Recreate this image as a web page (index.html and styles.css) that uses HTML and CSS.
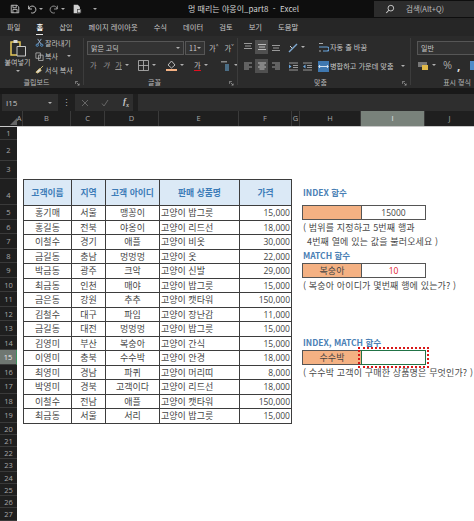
FILE: index.html
```html
<!DOCTYPE html>
<html lang="ko">
<head>
<meta charset="utf-8">
<title>멍 때리는 야옹이_part8 - Excel</title>
<link rel="stylesheet" href="styles.css">
</head>
<body>
<div class="app">
  <header class="titlebar">
    <div class="qat">
      <svg class="qi" viewBox="0 0 12 12"><path d="M1.5 1.5h7l2 2v7h-9zM3.5 1.5v3h4v-3M3.5 10.5v-4h5v4" fill="none" stroke="#cfcfcf" stroke-width="1"/></svg>
      <svg class="qi qi-undo" viewBox="0 0 12 12"><path d="M2 2v4h4M2.3 6A4.2 4.2 0 1 1 5 10.6" fill="none" stroke="#cfcfcf" stroke-width="1.1"/></svg>
      <span class="qcaret"></span>
      <svg class="qi qi-redo" viewBox="0 0 12 12"><path d="M10 2v4H6M9.7 6A4.2 4.2 0 1 0 7 10.6" fill="none" stroke="#9a9a9a" stroke-width="1.1"/></svg>
      <span class="qcaret"></span>
      <svg class="qi qi-file" viewBox="0 0 12 12"><path d="M2 1h5l2.500 2.500V11H2z" fill="#cfcfcf"/><path d="M6 6h5v5H6z" fill="#555"/><path d="M7 7h3v3H7z" fill="#cfcfcf"/></svg>
      <span class="qcaret qcaret-last"></span>
    </div>
    <div class="doc-title">멍 때리는 야옹이_part8&nbsp; -&nbsp; Excel</div>
    <div class="search">
      <svg class="search-icon" viewBox="0 0 12 12"><circle cx="7" cy="5" r="3.400" fill="none" stroke="#d0d0d0" stroke-width="1.100"/><path d="M4.600 7.500 1.500 10.800" stroke="#d0d0d0" stroke-width="1.300"/></svg>
      <span>검색(Alt+Q)</span>
    </div>
  </header>

  <nav class="tabs">
    <span>파일</span><span class="tab-on">홈</span><span>삽입</span><span>페이지 레이아웃</span><span>수식</span><span>데이터</span><span>검토</span><span>보기</span><span>도움말</span>
  </nav>

  <section class="ribbon">
    <div class="group g-clip">
      <div class="group-body clip-body">
        <div class="paste">
          <svg class="paste-icon" viewBox="0 0 18 18"><path d="M2 3h9v13H2z" fill="none" stroke="#e6c85a" stroke-width="1.500"/><path d="M4.500 1h4v3h-4z" fill="#d8d8d8"/><path d="M8 7.500h8.500V17H8z" fill="#2b2b2b" stroke="#c9c9c9"/></svg>
          <span>붙여넣기</span>
          <span class="caret caret-paste"></span>
        </div>
        <div class="clip-list">
          <div class="clip-row"><svg class="ci" viewBox="0 0 10 10"><path d="M3 1l4 6M7 1 3 7" stroke="#9db8d8" stroke-width="1"/><circle cx="2.500" cy="8" r="1.300" fill="none" stroke="#5b9bd5"/><circle cx="7.500" cy="8" r="1.300" fill="none" stroke="#5b9bd5"/></svg><span>잘라내기</span></div>
          <div class="clip-row"><svg class="ci" viewBox="0 0 10 10"><path d="M1 1h5v6H1zM4 3.500h5V9.500H4z" fill="#2b2b2b" stroke="#c4c4c4" stroke-width=".8"/></svg><span>복사</span><span class="caret caret-copy"></span></div>
          <div class="clip-row"><svg class="ci" viewBox="0 0 10 10"><path d="M5 5 9 1M1 8l4-4 2 2-4 3z" stroke="#d9c27a" fill="#d9d9d9" stroke-width="1"/></svg><span>서식 복사</span></div>
        </div>
      </div>
      <div class="group-label">클립보드<svg class="launcher" viewBox="0 0 6 6"><path d="M.5.500h3M.5.500v3M2 2l3 3M5 3v2H3" stroke="#aaa" fill="none" stroke-width=".8"/></svg></div>
    </div>

    <div class="group g-font">
      <div class="group-body font-body">
        <div class="font-row">
          <div class="combo combo-font"><span>맑은 고딕</span><span class="caret"></span></div>
          <div class="combo combo-size"><span>11</span><span class="caret"></span></div>
          <span class="rb-text size-up">가<sup>^</sup></span>
          <span class="rb-text size-down">가<sup>ˇ</sup></span>
        </div>
        <div class="font-row font-row2">
          <span class="rb-text fm">가</span><span class="rb-text fm fm-i">가</span><span class="rb-text fm fm-u">가</span><span class="caret"></span>
          <svg class="ri ri-border" viewBox="0 0 11 11"><path d="M.5.500h10v10H.5zM.5 5.500h10M5.500.500v10" fill="none" stroke="#aaa" stroke-width=".9"/></svg><span class="caret"></span>
          <svg class="ri ri-fill" viewBox="0 0 11 11"><path d="M5.500 1 9 5 5.500 8 2 5z" fill="none" stroke="#bbb"/><path d="M0 9h11v2H0z" fill="#f4b183"/></svg><span class="caret"></span>
          <span class="rb-text color-a">가</span><span class="caret"></span>
          <svg class="ri ri-phon" viewBox="0 0 11 11"><path d="M1 1h6v1.500H1z" fill="#888"/><path d="M5 4h4v7H5z" fill="#4b6d85"/></svg><span class="caret"></span>
        </div>
      </div>
      <div class="group-label">글꼴<svg class="launcher" viewBox="0 0 6 6"><path d="M.5.500h3M.5.500v3M2 2l3 3M5 3v2H3" stroke="#aaa" fill="none" stroke-width=".8"/></svg></div>
    </div>

    <div class="group g-align">
      <div class="group-body align-body">
        <div class="align-row">
          <span class="al"><svg viewBox="0 0 10 10"><path d="M1 1.500h8M2 4h6M1 6.500h8" stroke="#999"/></svg></span>
          <span class="al al-on"><svg viewBox="0 0 10 10"><path d="M1 2.500h8M2 5h6M1 7.500h8" stroke="#bbb"/></svg></span>
          <span class="al"><svg viewBox="0 0 10 10"><path d="M1 3.500h8M2 6h6M1 8.500h8" stroke="#999"/></svg></span>
          <svg class="ri ri-orient" viewBox="0 0 11 11"><path d="M1 10 9 2" stroke="#7fa8d0" stroke-width="1.500"/><path d="M2 4l2 2" stroke="#ccc"/></svg><span class="caret"></span>
          <svg class="ri ri-wrap" viewBox="0 0 11 11"><path d="M1 1.500h4" stroke="#aaa"/><path d="M1 5h8a1.500 1.500 0 0 1 0 4H5" fill="none" stroke="#6aa5dc" stroke-width="1.200"/><path d="M1 9h2" stroke="#aaa"/></svg>
          <span class="rb-text">자동 줄 바꿈</span>
        </div>
        <div class="align-row">
          <span class="al"><svg viewBox="0 0 10 10"><path d="M1 2h8M1 4h5M1 6h8M1 8h5" stroke="#999"/></svg></span>
          <span class="al al-on"><svg viewBox="0 0 10 10"><path d="M1 2h8M2.500 4h5M1 6h8M2.500 8h5" stroke="#bbb"/></svg></span>
          <span class="al"><svg viewBox="0 0 10 10"><path d="M1 2h8M4 4h5M1 6h8M4 8h5" stroke="#999"/></svg></span>
          <svg class="ri ri-indent" viewBox="0 0 11 11"><path d="M1 2h9M5 4.500h5M5 6.500h5M1 9h9" stroke="#999"/><path d="M1 3.500v4l2.500-2z" fill="#6aa5dc"/></svg>
          <svg class="ri ri-outdent" viewBox="0 0 11 11"><path d="M1 2h9M5 4.500h5M5 6.500h5M1 9h9" stroke="#999"/><path d="M3.500 3.500v4L1 5.500z" fill="#6aa5dc"/></svg>
          <svg class="ri ri-merge" viewBox="0 0 11 11"><path d="M0 0h11v11H0z" fill="#3f78b0"/><path d="M1 5.500h9M2 4 .8 5.500 2 7M9 4l1.200 1.500L9 7" fill="none" stroke="#e6eef6" stroke-width=".9"/></svg>
          <span class="rb-text">병합하고 가운데 맞춤</span><span class="caret caret-merge"></span>
        </div>
      </div>
      <div class="group-label">맞춤<svg class="launcher" viewBox="0 0 6 6"><path d="M.5.500h3M.5.500v3M2 2l3 3M5 3v2H3" stroke="#aaa" fill="none" stroke-width=".8"/></svg></div>
    </div>

    <div class="group g-num">
      <div class="group-body num-body">
        <div class="combo combo-num"><span>일반</span></div>
        <div class="num-row">
          <svg class="ri" viewBox="0 0 11 11"><path d="M0 2h9v5H0z" fill="#777"/><path d="M4 5h6v5H4z" fill="#e0b94a"/></svg><span class="caret"></span>
          <span class="pct">%</span>
          <span class="comma">,</span>
          <svg class="ri ri-dec" viewBox="0 0 11 11"><path d="M0 1h11v9H0z" fill="#4f8cc9"/></svg>
        </div>
      </div>
      <div class="group-label">표시 형식</div>
    </div>
  </section>

  <div class="ribbon-gap"></div>

  <div class="formula-bar">
    <div class="namebox"><span>I15</span><span class="caret"></span></div>
    <span class="fb-dots">⋮</span>
    <div class="fb-btns">
      <svg class="fi" viewBox="0 0 8 8"><path d="M1 1l6 6M7 1 1 7" stroke="#666" stroke-width="1"/></svg>
      <svg class="fi" viewBox="0 0 8 8"><path d="M1 4.500 3 7 7 1" fill="none" stroke="#666" stroke-width="1"/></svg>
      <span class="fx">f<sub>x</sub></span>
    </div>
    <div class="fb-input"></div>
  </div>

  <div class="col-heads">
    <div class="corner"><span class="corner-tri"></span></div>
    <div class="ch ch-a">A</div><div class="ch ch-b">B</div><div class="ch ch-c">C</div><div class="ch ch-d">D</div><div class="ch ch-e">E</div><div class="ch ch-f">F</div><div class="ch ch-g">G</div><div class="ch ch-h">H</div><div class="ch ch-i">I</div><div class="ch ch-j">J</div>
  </div>

  <div class="sheet">
    <div class="row-heads">
      <div class="rh rh1">1</div><div class="rh rh2">2</div><div class="rh rh3">3</div><div class="rh rh4">4</div>
      <div class="rh">5</div><div class="rh">6</div><div class="rh">7</div><div class="rh">8</div><div class="rh">9</div><div class="rh">10</div><div class="rh">11</div><div class="rh">12</div><div class="rh">13</div><div class="rh">14</div>
      <div class="rh rh-on">15</div>
      <div class="rh">16</div><div class="rh">17</div><div class="rh">18</div><div class="rh">19</div>
      <div class="rh rhs">20</div><div class="rhs rh">21</div><div class="rhs rh">22</div><div class="rhs rh">23</div><div class="rhs rh">24</div><div class="rhs rh">25</div><div class="rhs rh">26</div><div class="rhs rh">27</div>
    </div>
    <main class="canvas">
      <div class="data">
        <div class="hd">고객이름</div><div class="hd">지역</div><div class="hd">고객 아이디</div><div class="hd">판매 상품명</div><div class="hd">가격</div>
        <div class="c">홍기매</div><div class="c">서울</div><div class="c">맹꽁이</div><div class="c l">고양이 밥그릇</div><div class="c r">15,000</div>
        <div class="c">홍길동</div><div class="c">전북</div><div class="c">야옹이</div><div class="c l">고양이 리드선</div><div class="c r">18,000</div>
        <div class="c">이철수</div><div class="c">경기</div><div class="c">애플</div><div class="c l">고양이 비옷</div><div class="c r">30,000</div>
        <div class="c">금길동</div><div class="c">충남</div><div class="c">멍멍멍</div><div class="c l">고양이 옷</div><div class="c r">22,000</div>
        <div class="c">박금동</div><div class="c">광주</div><div class="c">크악</div><div class="c l">고양이 신발</div><div class="c r">29,000</div>
        <div class="c">최금동</div><div class="c">인천</div><div class="c">매야</div><div class="c l">고양이 밥그릇</div><div class="c r">15,000</div>
        <div class="c">금은동</div><div class="c">강원</div><div class="c">추추</div><div class="c l">고양이 캣타워</div><div class="c r">150,000</div>
        <div class="c">김철수</div><div class="c">대구</div><div class="c">파임</div><div class="c l">고양이 장난감</div><div class="c r">11,000</div>
        <div class="c">금길동</div><div class="c">대전</div><div class="c">멍멍멍</div><div class="c l">고양이 밥그릇</div><div class="c r">15,000</div>
        <div class="c">김영미</div><div class="c">부산</div><div class="c">복숭아</div><div class="c l">고양이 간식</div><div class="c r">15,000</div>
        <div class="c">이영미</div><div class="c">충북</div><div class="c">수수박</div><div class="c l">고양이 안경</div><div class="c r">18,000</div>
        <div class="c">최영미</div><div class="c">경남</div><div class="c">파퀴</div><div class="c l">고양이 머리띠</div><div class="c r">8,000</div>
        <div class="c">박영미</div><div class="c">경북</div><div class="c">고객이다</div><div class="c l">고양이 리드선</div><div class="c r">18,000</div>
        <div class="c">이철수</div><div class="c">전남</div><div class="c">애플</div><div class="c l">고양이 캣타워</div><div class="c r">150,000</div>
        <div class="c">최금동</div><div class="c">서울</div><div class="c">서리</div><div class="c l">고양이 밥그릇</div><div class="c r">15,000</div>
      </div>
      <div class="notes">
        <div class="n-title n-first">INDEX 함수</div>
        <div class="pair"><div class="k"></div><div class="v">15000</div></div>
        <div class="n-line">( 범위를 지정하고 5번째 행과</div>
        <div class="n-line n-in">4번째 열에 있는 값을 불러오세요 )</div>
        <div class="n-title">MATCH 함수</div>
        <div class="pair"><div class="k">복숭아</div><div class="v v-red">10</div></div>
        <div class="n-line">( 복숭아 아이디가 몇번째 행에 있는가? )</div>
        <div class="n-gap"></div>
        <div class="n-title">INDEX, MATCH 함수</div>
        <div class="pair"><div class="k">수수박</div><div class="v v-sel"></div></div>
        <div class="n-line">( 수수박 고객이 구매한 상품명은 무엇인가? )</div>
      </div>
    </main>
  </div>
</div>
</body>
</html>
```
FILE: styles.css
```css
* { box-sizing: border-box; }
html, body { margin: 0; padding: 0; }
body { width: 474px; height: 521px; overflow: hidden; background: #fff; font-family: "Noto Sans CJK KR", "Noto Sans", sans-serif; }
svg { display: block; flex: none; }
.app { width: 474px; height: 521px; display: flex; flex-direction: column; overflow: hidden; }

.titlebar { height: 18px; background: #0e0e0e; display: flex; align-items: center; color: #cfcfcf; flex: none; }
.qat { display: flex; align-items: center; padding-left: 10px; width: 188px; flex: none; }
.qi { width: 10px; height: 10px; }
.qi-undo { margin-left: 7px; }
.qi-redo { margin-left: 6px; }
.qi-file { margin-left: 7px; }
.qcaret { width: 0; height: 0; margin-left: 2px; border: 2px solid transparent; border-top-color: #aaa; border-bottom: 0; }
.qcaret-last { margin-left: 11px; }
.doc-title { width: 186px; flex: none; font-size: 8px; line-height: 18px; white-space: nowrap; color: #d2d2d2; }
.search { width: 100px; height: 16px; margin-top: -1px; background: #2c2c2c; display: flex; align-items: center; padding-left: 11px; gap: 11px; font-size: 7.5px; color: #bdbdbd; flex: none; }
.search-icon { width: 10px; height: 10px; }

.tabs { height: 18px; background: #262626; display: flex; align-items: center; gap: 16px; padding-left: 7px; font-size: 7.3px; color: #c8c8c8; flex: none; white-space: nowrap; }
.tabs span { line-height: 18px; }
.tab-on { position: relative; color: #fff; font-weight: 700; }
.tab-on::after { content: ""; position: absolute; left: 0; right: 0; bottom: 1px; height: 1.500px; background: #e8e8e8; }

.ribbon { height: 52px; background: #2b2b2b; display: flex; flex: none; color: #c6c6c6; font-size: 7.2px; }
.group { display: flex; flex-direction: column; flex: none; position: relative; }
.group::after { content: ""; position: absolute; right: 0; top: 2px; bottom: 3px; width: 1px; background: #3c3c3c; }
.group-body { height: 41px; flex: none; }
.group-label { height: 11px; line-height: 10px; text-align: center; font-size: 7px; color: #b8b8b8; }
.launcher { position: absolute; right: 4px; bottom: 2px; width: 5px; height: 5px; }
.g-clip { width: 84px; }
.g-clip .group-label { padding-right: 11px; }
.g-font { width: 154px; }
.g-font .group-label { padding-right: 13px; }
.g-align { width: 173px; }
.g-align .group-label { padding-right: 8px; }
.g-num { flex: 1; }
.g-num::after { display: none; }
.g-num .group-label { padding-left: 16px; }

.caret { display: inline-block; width: 0; height: 0; border: 2px solid transparent; border-top-color: #b0b0b0; border-bottom: 0; flex: none; }
.rb-text { white-space: nowrap; line-height: 12px; }

.clip-body { display: flex; }
.paste { width: 35px; padding-top: 3px; display: flex; flex-direction: column; align-items: center; font-size: 7px; line-height: 9px; white-space: nowrap; }
.paste-icon { width: 18px; height: 18px; margin-bottom: 1px; }
.caret-paste { margin-top: 3px; }
.clip-list { display: flex; flex-direction: column; }
.clip-row { height: 13.500px; display: flex; align-items: center; gap: 1px; white-space: nowrap; font-size: 7px; }
.ci { width: 9px; height: 9px; }
.caret-copy { margin-left: 8px; }

.font-body { padding: 5px 0 0 3px; display: flex; flex-direction: column; gap: 3px; }
.font-row { display: flex; align-items: center; height: 14px; }
.combo { height: 14px; background: #333; border: 1px solid #565656; display: flex; align-items: center; justify-content: space-between; padding: 0 3px; font-size: 7px; color: #c8c8c8; flex: none; }
.combo-font { width: 97px; }
.combo-size { width: 20px; margin-left: 1px; }
.size-up { margin-left: 4px; }
.size-down { margin-left: 6px; }
.rb-text sup { font-size: 5px; line-height: 0; }
.font-row2 { padding-left: 3px; }
.fm { margin-right: 6px; color: #9c9c9c; }
.fm-i { font-style: italic; }
.fm-u { text-decoration: underline; margin-right: 3px; }
.ri { width: 11px; height: 11px; }
.ri-border { margin: 0 3px 0 9px; }
.ri-fill { margin: 0 3px 0 10px; }
.color-a { margin: 0 3px 0 10px; border-bottom: 1.500px solid #e01020; line-height: 10px; }
.ri-phon { margin: 0 3px 0 12px; }

.align-body { padding: 4px 0 0 3px; display: flex; flex-direction: column; gap: 5px; }
.align-row { display: flex; align-items: center; height: 14px; }
.al { width: 13px; height: 14px; margin-right: 1px; display: flex; align-items: center; justify-content: center; }
.al svg { width: 10px; height: 10px; }
.al-on { background: #505050; }
.ri-orient { margin: 0 2px 0 5px; }
.ri-wrap { margin: 0 1px 0 13px; }
.ri-indent { margin-left: 5px; }
.ri-outdent { margin-left: 3px; }
.ri-merge { margin: 0 1px 0 5px; }
.caret-merge { margin-left: 7px; }

.num-body { padding: 5px 0 0 6px; display: flex; flex-direction: column; gap: 3px; }
.combo-num { width: 70px; }
.num-row { height: 14px; display: flex; align-items: center; padding-left: 1px; }
.num-row .caret { margin-left: 3px; }
.pct { margin-left: 7px; font-size: 11px; color: #aaa; font-family: "Open Sans", sans-serif; line-height: 14px; }
.comma { margin-left: 5px; font-size: 12px; font-weight: 700; color: #ddd; line-height: 9px; font-family: "Open Sans", sans-serif; }
.ri-dec { margin-left: 9px; }

.ribbon-gap { height: 6px; background: #191919; flex: none; }

.formula-bar { height: 17px; background: #1f1f1f; display: flex; align-items: stretch; flex: none; }
.namebox { width: 56px; margin-left: 2px; background: #2e2e2e; display: flex; align-items: center; justify-content: space-between; padding: 0 6px 0 4px; font-size: 8px; color: #c4c4c4; font-family: "Open Sans", sans-serif; }
.fb-dots { width: 17px; text-align: center; font-size: 9px; line-height: 17px; color: #aaa; }
.fb-btns { width: 58px; background: #2e2e2e; display: flex; align-items: center; gap: 12px; padding-left: 6px; }
.fi { width: 8px; height: 8px; }
.fx { font-family: "Liberation Serif", serif; font-style: italic; font-weight: 700; font-size: 9px; color: #c8c8c8; line-height: 10px; margin-left: 2px; }
.fx sub { font-size: 6px; }
.fb-input { flex: 1; margin-left: 5px; background: #2e2e2e; }

.col-heads { height: 16px; background: #1f1f1f; display: flex; flex: none; color: #a8a8a8; font-size: 7.500px; font-family: "Open Sans", sans-serif; border-bottom: 1px solid #c8c8c8; }
.corner { width: 17px; position: relative; flex: none; }
.corner-tri { position: absolute; right: 0; bottom: 1px; width: 0; height: 0; border-left: 7px solid transparent; border-bottom: 7px solid #666; }
.ch { text-align: center; line-height: 15px; border-right: 1px solid #3a3a3a; flex: none; }
.ch-a { width: 6px; overflow: visible; text-indent: -1px; }
.ch-b { width: 48px; }
.ch-c { width: 34px; }
.ch-d { width: 54px; }
.ch-e { width: 80px; }
.ch-f { width: 53px; }
.ch-g { width: 8px; }
.ch-h { width: 61px; }
.ch-i { width: 64px; background: #79827b; color: #e8e8e8; }
.ch-j { flex: 1; border-right: 0; }

.sheet { flex: 1; display: flex; min-height: 0; }
.row-heads { width: 17px; background: #1f1f1f; flex: none; color: #a8a8a8; font-size: 7.500px; font-family: "Open Sans", sans-serif; }
.rh { height: 14.500px; line-height: 14px; text-align: center; border-bottom: 1px solid #3a3a3a; }
.rh1 { height: 13px; line-height: 12px; }
.rh2 { height: 21px; line-height: 20px; }
.rh3 { height: 18px; line-height: 17px; }
.rh4 { height: 26px; line-height: 32px; }
.rhs { height: 12.250px; line-height: 12px; font-size: 7.500px; }
.rh-on { background: #6f7771; color: #e8e8e8; border-right: 1px solid #3d8f5c; }

.canvas { flex: 1; background: #fff; display: flex; align-items: flex-start; padding: 52px 0 0 6px; }
.data { display: grid; grid-template-columns: 47px 33px 53px 79px 51px; grid-template-rows: 25px; grid-auto-rows: 13.500px; gap: 1px; padding: 1px; background: #3d3d3d; flex: none; font-size: 9px; color: #444; }
.hd { background: #dbe9f6; color: #3d7cb8; font-weight: 700; font-size: 8.800px; display: flex; align-items: center; justify-content: center; white-space: nowrap; }
.c { background: #fff; line-height: 13px; text-align: center; white-space: nowrap; overflow: hidden; }
.l { text-align: left; padding-left: 1px; }
.r { text-align: right; padding-right: 1px; font-family: "Open Sans", sans-serif; font-size: 8.500px; }

.notes { width: 172px; margin-left: 10px; flex: none; font-size: 9px; color: #484848; white-space: nowrap; }
.n-title { height: 14.500px; line-height: 13px; font-weight: 700; color: #4a7fb5; font-size: 8.500px; padding-left: 1px; }
.n-first { height: 26px; line-height: 27px; }
.pair { height: 15px; margin-bottom: -0.500px; display: flex; }
.k { width: 59px; background: #f4b183; border: 1px solid #555; border-right: 0; text-align: center; line-height: 13px; color: #444; }
.v { width: 65px; background: #fff; border: 1px solid #555; text-align: center; line-height: 13px; font-family: "Open Sans", "Noto Sans CJK KR", sans-serif; font-size: 8.500px; color: #444; }
.v-red { color: #e0202a; }
.v-sel { border: 1px solid #217346; outline: 2px dotted #d81818; outline-offset: 1px; }
.n-line { height: 14.500px; line-height: 15px; padding-left: 1px; letter-spacing: .15px; }
.n-in { padding-left: 5px; }
.n-gap { height: 43.500px; }
```
